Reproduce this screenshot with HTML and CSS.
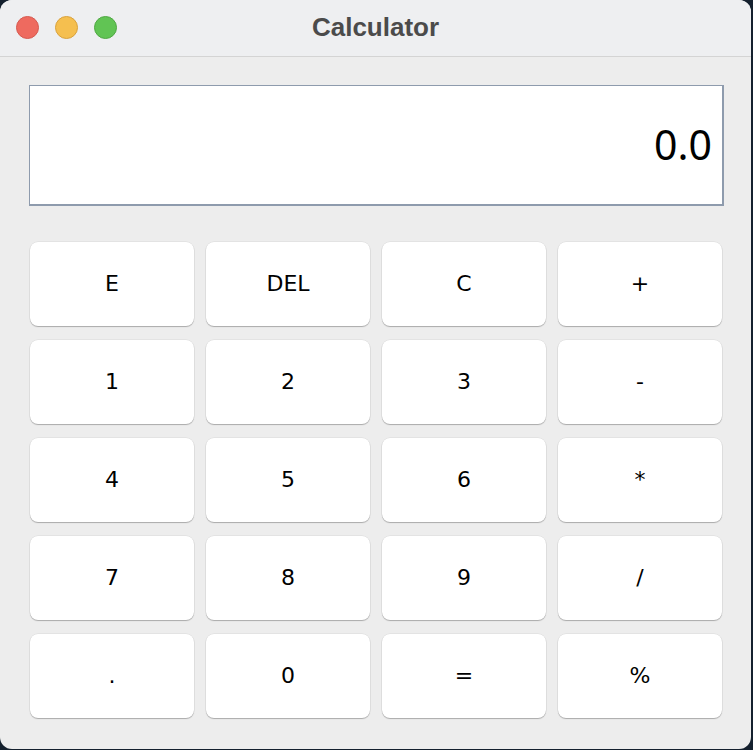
FILE: index.html
```html
<!DOCTYPE html>
<html lang="en">
<head>
    <meta charset="UTF-8">
    <meta name="viewport" content="width=device-width, initial-scale=1.0">
    <title>Calculator</title>
    <link rel="stylesheet" href="styles.css">
</head>
<body>
    <div class="window">
        <div class="titlebar">
            <div class="lights">
                <span class="light red"></span>
                <span class="light yellow"></span>
                <span class="light green"></span>
            </div>
            <div class="title">Calculator</div>
        </div>
        <div class="content">
            <div class="display">0.0</div>
            <div class="keys">
                <button class="key">E</button>
                <button class="key">DEL</button>
                <button class="key">C</button>
                <button class="key">+</button>
                <button class="key">1</button>
                <button class="key">2</button>
                <button class="key">3</button>
                <button class="key">-</button>
                <button class="key">4</button>
                <button class="key">5</button>
                <button class="key">6</button>
                <button class="key">*</button>
                <button class="key">7</button>
                <button class="key">8</button>
                <button class="key">9</button>
                <button class="key">/</button>
                <button class="key">.</button>
                <button class="key">0</button>
                <button class="key">=</button>
                <button class="key">%</button>
            </div>
        </div>
    </div>
</body>
</html>
```

FILE: styles.css
```css
html, body {
    margin: 0;
    padding: 0;
    background: #14202e;
}

.window {
    width: 751px;
    height: 749px;
    background: #ededed;
    border-radius: 12px;
    overflow: hidden;
    font-family: "DejaVu Sans", sans-serif;
}

.titlebar {
    position: relative;
    height: 56px;
    background: #eeeff1;
    border-bottom: 1px solid #d4d4d4;
    display: flex;
    align-items: center;
    justify-content: center;
}

.lights {
    position: absolute;
    left: 16px;
    top: 16px;
    display: flex;
    gap: 16px;
}

.light {
    width: 23px;
    height: 23px;
    border-radius: 50%;
    box-sizing: border-box;
}

.red { background: #ee6a5f; border: 1px solid #d65a50; }
.yellow { background: #f5bf4f; border: 1px solid #d9a23d; }
.green { background: #61c454; border: 1px solid #4fa843; }

.title {
    font-family: "Liberation Sans", Arial, sans-serif;
    font-weight: 700;
    font-size: 26px;
    color: #4b4b4b;
    margin-top: -2px;
}

.content {
    padding: 28px 29px 0 29px;
}

.display {
    height: 121px;
    box-sizing: border-box;
    width: 695px;
    background: #fff;
    border: 1px solid #8e9bad;
    border-right-width: 2px;
    border-bottom-width: 2px;
    font-family: "Noto Sans", sans-serif;
    font-size: 41px;
    color: #000;
    padding-right: 10px;
    display: flex;
    align-items: center;
    justify-content: flex-end;
    padding-bottom: 2px;
}

.keys {
    display: grid;
    grid-template-columns: repeat(4, 164px);
    grid-auto-rows: 84px;
    column-gap: 12px;
    row-gap: 14px;
    margin-top: 36px;
    padding-left: 1px;
}

.key {
    background: #fff;
    border: none;
    border-radius: 8px;
    box-shadow: 0 1px 1px rgba(0, 0, 0, 0.25), 0 0 0 0.5px rgba(0, 0, 0, 0.08);
    font-family: "DejaVu Sans", sans-serif;
    font-size: 22px;
    color: #000;
    padding: 0;
    padding-bottom: 2px;
}
```
